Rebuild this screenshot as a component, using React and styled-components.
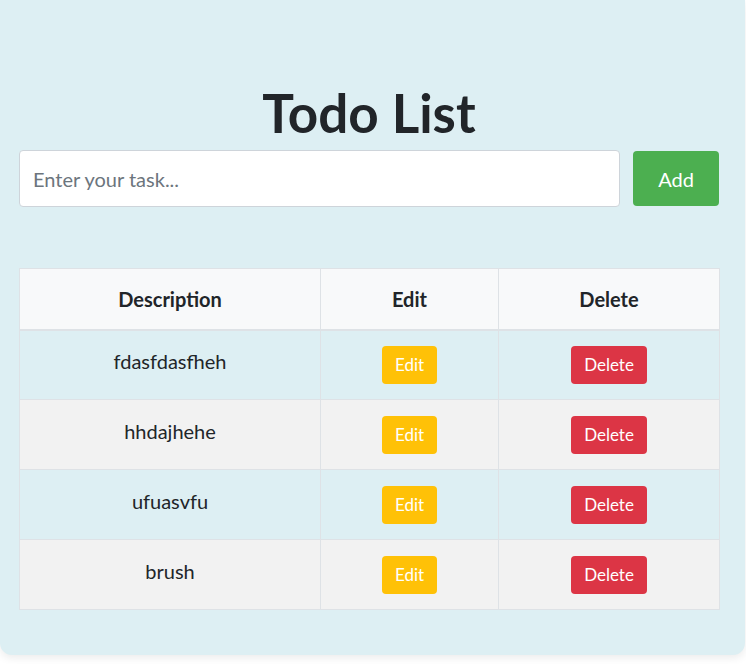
import styled, { createGlobalStyle } from "styled-components";

const GlobalStyle = createGlobalStyle`
  html, body {
    margin: 0;
    padding: 0;
    background: #ffffff;
    font-family: "Lato", "Noto Sans", sans-serif;
    color: #212529;
  }
  * { box-sizing: border-box; }
`;

const Page = styled.div`
  width: 746px;
  height: 664px;
  overflow: hidden;
`;

const Container = styled.div`
  width: 745px;
  height: 655px;
  background: #ddeff3;
  border-radius: 0 0 12px 12px;
  box-shadow: 0 3px 8px rgba(0, 0, 0, 0.08);
  padding: 80px 0 0 19px;
`;

const Content = styled.div`
  width: 700px;
`;

const Title = styled.h1`
  margin: 0 0 4px;
  font-size: 53px;
  font-weight: 700;
  line-height: 66px;
  text-align: center;
  color: #212529;
`;

const Form = styled.div`
  display: flex;
  gap: 13px;
  align-items: center;
`;

const Input = styled.input`
  flex: 1;
  height: 57px;
  border: 1px solid #ced4da;
  border-radius: 4px;
  padding: 0 13px;
  font-family: inherit;
  font-size: 20px;
  color: #212529;
  background: #fff;
  outline: none;

  &::placeholder {
    color: #6c757d;
  }
`;

const AddButton = styled.button`
  width: 86px;
  height: 55px;
  border: none;
  border-radius: 4px;
  background: #4caf50;
  color: #fff;
  font-family: inherit;
  font-size: 20px;
  cursor: pointer;
`;

const Table = styled.table`
  width: 700px;
  margin-top: 61px;
  border-collapse: collapse;
  table-layout: fixed;
  border: 1px solid #dee2e6;
`;

const HeadCell = styled.th`
  height: 61px;
  background: #f8f9fa;
  border: 1px solid #dee2e6;
  border-bottom: 2px solid #dee2e6;
  font-size: 20px;
  font-weight: 700;
  text-align: center;
  vertical-align: middle;
`;

const Row = styled.tr`
  background: ${(p) => (p.$odd ? "#f2f2f2" : "#ddeff3")};
`;

const Cell = styled.td`
  height: 70px;
  border: 1px solid #dee2e6;
  text-align: center;
  vertical-align: middle;
  font-size: 20px;
  padding: ${(p) => (p.$text ? "0 0 7px" : "0")};
`;

const ActionButton = styled.button`
  height: 38px;
  padding: 0 13px;
  border: none;
  border-radius: 4px;
  background: ${(p) => (p.$variant === "danger" ? "#dc3545" : "#ffc107")};
  color: #fff;
  font-family: inherit;
  font-size: 17px;
  cursor: pointer;
`;

const tasks = ["fdasfdasfheh", "hhdajhehe", "ufuasvfu", "brush"];

export default function App() {
  return (
    <Page>
      <GlobalStyle />
      <Container>
        <Content>
          <Title>Todo List</Title>
          <Form>
            <Input placeholder="Enter your task..." />
            <AddButton>Add</AddButton>
          </Form>
          <Table>
            <colgroup>
              <col style={{ width: 301 }} />
              <col style={{ width: 178 }} />
              <col style={{ width: 221 }} />
            </colgroup>
            <thead>
              <tr>
                <HeadCell>Description</HeadCell>
                <HeadCell>Edit</HeadCell>
                <HeadCell>Delete</HeadCell>
              </tr>
            </thead>
            <tbody>
              {tasks.map((task, i) => (
                <Row key={task} $odd={i % 2 === 1}>
                  <Cell $text>{task}</Cell>
                  <Cell>
                    <ActionButton>Edit</ActionButton>
                  </Cell>
                  <Cell>
                    <ActionButton $variant="danger">Delete</ActionButton>
                  </Cell>
                </Row>
              ))}
            </tbody>
          </Table>
        </Content>
      </Container>
    </Page>
  );
}
